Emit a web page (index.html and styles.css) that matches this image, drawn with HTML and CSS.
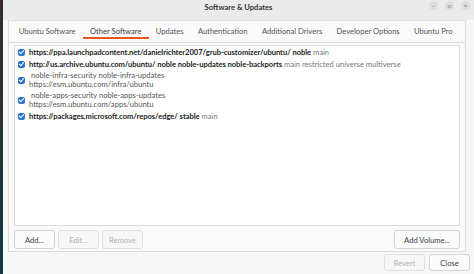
FILE: index.html
```html
<!DOCTYPE html>
<html lang="en">
<head>
    <meta charset="UTF-8">
    <title>Software &amp; Updates</title>
    <link rel="stylesheet" href="styles.css">
</head>
<body>
    <div class="desktop"></div>
    <div class="window">
        <header class="titlebar">
            <span class="title">Software &amp; Updates</span>
            <div class="controls">
                <span class="ctl">&#8211;</span>
                <span class="ctl">&#9633;</span>
                <span class="ctl">&#215;</span>
            </div>
        </header>
        <div class="notebook">
            <nav class="tabs">
                <span class="tab">Ubuntu Software</span>
                <span class="tab active">Other Software</span>
                <span class="tab">Updates</span>
                <span class="tab">Authentication</span>
                <span class="tab">Additional Drivers</span>
                <span class="tab">Developer Options</span>
                <span class="tab">Ubuntu Pro</span>
            </nav>
            <div class="page">
                <ul class="sources">
                    <li class="source">
                        <span class="check"></span>
                        <span class="line"><b>https://ppa.launchpadcontent.net/danielrichter2007/grub-customizer/ubuntu/ noble</b> main</span>
                    </li>
                    <li class="source">
                        <span class="check"></span>
                        <span class="line"><b>http://us.archive.ubuntu.com/ubuntu/ noble noble-updates noble-backports</b> main restricted universe multiverse</span>
                    </li>
                    <li class="source two">
                        <span class="check"></span>
                        <span class="lines">
                            <span class="sub">&nbsp;noble-infra-security noble-infra-updates</span>
                            <span class="sub">https://esm.ubuntu.com/infra/ubuntu</span>
                        </span>
                    </li>
                    <li class="source two">
                        <span class="check"></span>
                        <span class="lines">
                            <span class="sub">&nbsp;noble-apps-security noble-apps-updates</span>
                            <span class="sub">https://esm.ubuntu.com/apps/ubuntu</span>
                        </span>
                    </li>
                    <li class="source">
                        <span class="check"></span>
                        <span class="line"><b>https://packages.microsoft.com/repos/edge/ stable</b> main</span>
                    </li>
                </ul>
                <div class="actions">
                    <button class="btn">Add...</button>
                    <button class="btn" disabled>Edit...</button>
                    <button class="btn" disabled>Remove</button>
                    <span class="spacer"></span>
                    <button class="btn wide">Add Volume...</button>
                </div>
            </div>
        </div>
        <footer class="footer">
            <button class="btn" disabled>Revert</button>
            <button class="btn">Close</button>
        </footer>
    </div>
</body>
</html>
```

FILE: styles.css
```css
html, body {
    margin: 0;
    height: 274px;
}
body {
    display: flex;
    font-family: 'Lato', 'Noto Sans', sans-serif;
    font-size: 7.6px;
    color: #3d3d3d;
    overflow: hidden;
}
.desktop {
    width: 3px;
    background: linear-gradient(#3a2c2a, #24333a 50%, #0f3a3c);
}
.window {
    flex: 1;
    display: flex;
    flex-direction: column;
    background-color: #f7f7f7;
}
.titlebar {
    height: 20px;
    flex: none;
    background-color: #ebebeb;
    display: flex;
    justify-content: center;
    position: relative;
}
.title {
    font-weight: bold;
    color: #333;
    margin-top: 2px;
}
.controls {
    position: absolute;
    right: 4px;
    top: 1px;
    display: flex;
    gap: 7px;
}
.ctl {
    width: 9px;
    height: 9px;
    border-radius: 50%;
    background-color: #dedede;
    color: #666;
    font-size: 6px;
    line-height: 9px;
    text-align: center;
}
.notebook {
    margin: 0 8px 0 5px;
    height: 232px;
    box-sizing: border-box;
    flex: none;
    border: 1px solid #dcdcdc;
    display: flex;
    flex-direction: column;
    background-color: #fafafa;
}
.tabs {
    height: 21px;
    flex: none;
    display: flex;
    align-items: stretch;
    border-bottom: 1px solid #dcdcdc;
    padding-left: 2.5px;
    white-space: nowrap;
}
.tab {
    display: flex;
    align-items: center;
    padding: 0 7.2px;
    color: #555;
    border-bottom: 2px solid transparent;
}
.tab.active {
    color: #3d3d3d;
    border-bottom-color: #e95420;
    margin-bottom: 3px;
    padding-top: 3px;
}
.page {
    flex: 1;
    display: flex;
    flex-direction: column;
    padding: 2px 5px 0 5px;
}
.sources {
    list-style: none;
    margin: 0;
    padding: 0;
    height: 181px;
    box-sizing: border-box;
    flex: none;
    background-color: #fff;
    border: 1px solid #dcdcdc;
}
.source {
    display: flex;
    align-items: center;
    height: 12px;
    padding-left: 3px;
    white-space: nowrap;
}
.source.two {
    height: 20px;
}
.check {
    width: 7px;
    height: 7px;
    border-radius: 2px;
    background-color: #2b74c8;
    margin-right: 4px;
    position: relative;
    flex: none;
}
.check::after {
    content: "";
    position: absolute;
    left: 2px;
    top: 0.5px;
    width: 2px;
    height: 4px;
    border: solid #fff;
    border-width: 0 1.2px 1.2px 0;
    transform: rotate(45deg);
}
.line b {
    color: #222;
    letter-spacing: -0.05px;
}
.line {
    color: #777;
}
.lines {
    display: flex;
    flex-direction: column;
    line-height: 9px;
    color: #555;
}
.actions {
    display: flex;
    gap: 3px;
    margin-top: 4px;
}
.spacer {
    flex: 1;
}
.btn {
    font-family: inherit;
    font-size: 7.6px;
    height: 19px;
    width: 41px;
    padding: 0;
    border: 1px solid #d4d4d4;
    border-radius: 3px;
    background-color: #fbfbfb;
    color: #3d3d3d;
}
.btn:disabled {
    color: #b0b0b0;
    border-color: #e0e0e0;
    background-color: #f7f7f7;
}
.btn.wide {
    width: 66px;
}
.footer {
    display: flex;
    justify-content: flex-end;
    gap: 4px;
    padding: 2px 4px 0 0;
}
.footer .btn {
    height: 17px;
}
```
